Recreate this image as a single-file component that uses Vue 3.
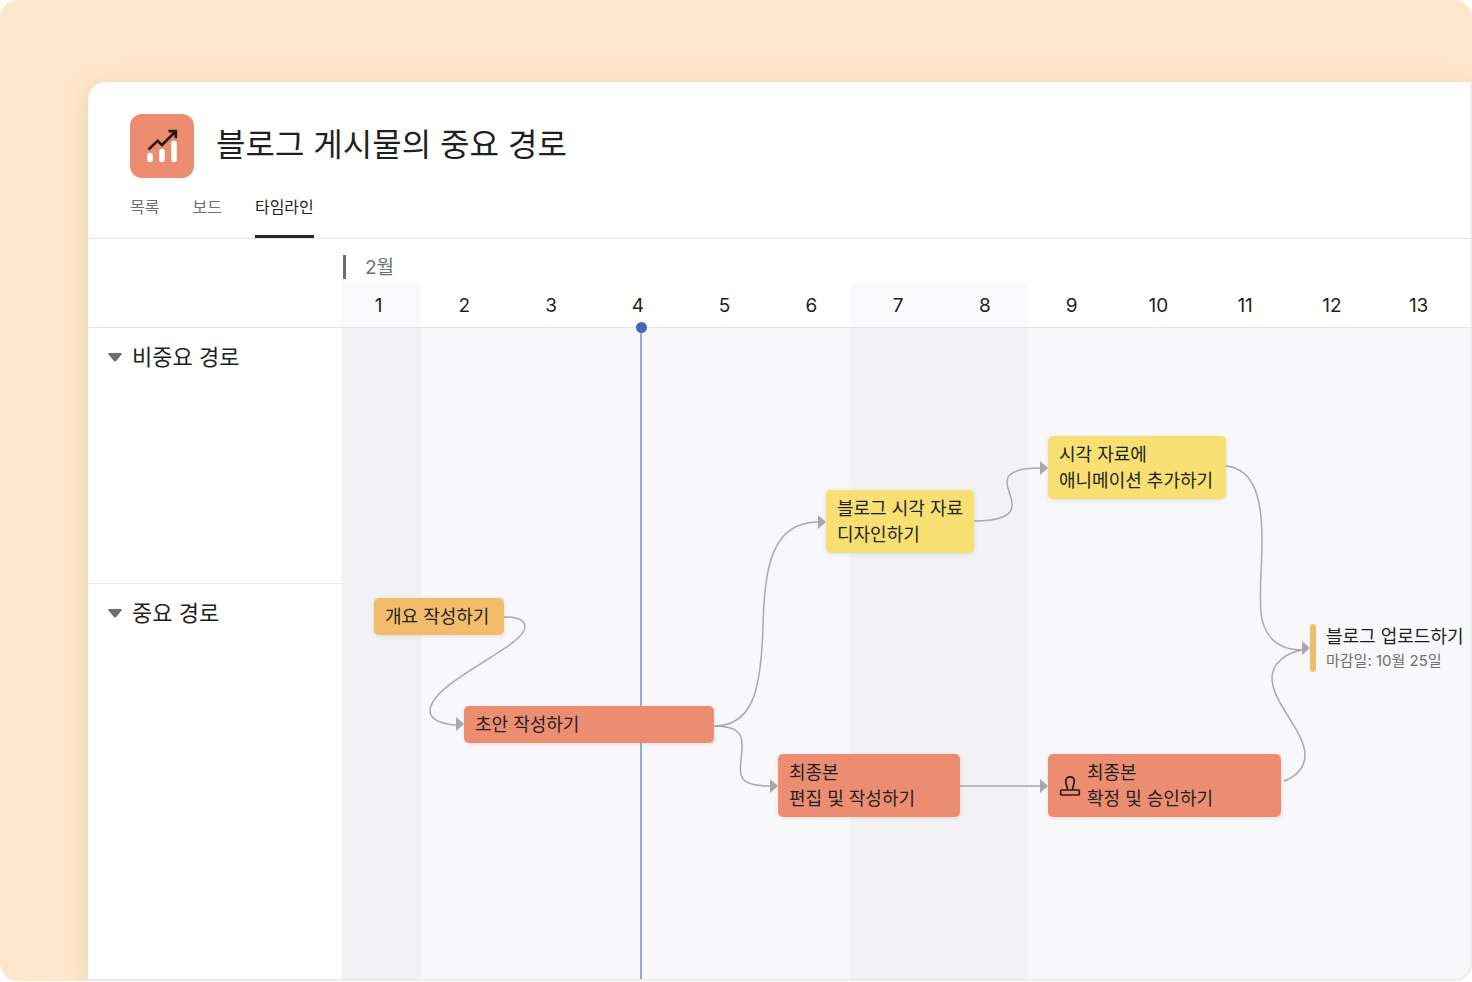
<template>
  <div class="stage">
    <main class="window">
      <header class="header">
        <div class="title-row">
          <svg class="project-icon" viewBox="0 0 64 64" aria-hidden="true">
            <rect width="64" height="64" rx="12" fill="#ec8d71" />
            <path d="M20 41.500V45.500M32 37.500V45.500M44 29.500V45.500" stroke="#fff" stroke-width="5.600" stroke-linecap="round" />
            <path d="M18.500 35.500L27.700 26.800L32 31L45.500 17.500M38.500 17.200H45.800V24.300" fill="none" stroke="#2a1a18" stroke-width="2.700" />
          </svg>
          <h1 class="title">블로그 게시물의 중요 경로</h1>
        </div>
        <nav class="tabs">
          <a
            v-for="tab in tabs"
            :key="tab"
            href="#"
            class="tab"
            :class="{ active: tab === activeTab }"
            @click.prevent="activeTab = tab"
          >{{ tab }}</a>
        </nav>
      </header>

      <div class="dates">
        <div class="month">2월</div>
        <div class="day-grid days">
          <span class="band first"></span>
          <span class="band weekend"></span>
          <span v-for="day in 13" :key="day" class="day" :style="{ gridColumn: day }">{{ day }}</span>
        </div>
      </div>

      <div class="board">
        <aside class="sections">
          <section v-for="section in sections" :key="section" class="section">
            <button type="button" class="section-toggle">
              <svg class="caret" viewBox="0 0 14 9" aria-hidden="true">
                <path d="M1 0H13Q14.500 .3 13.500 1.500L8 8Q7 9 6 8L.5 1.500Q-.5 .3 1 0Z" fill="#6d6e6f" />
              </svg>
              <span>{{ section }}</span>
            </button>
          </section>
        </aside>

        <div class="canvas">
          <div class="day-grid canvas-bands">
            <span class="band first"></span>
            <span class="band weekend"></span>
          </div>

          <div class="today"></div>

          <svg class="edges" aria-hidden="true">
            <path v-for="edge in edges" :key="edge" :d="edge" class="edge" />
            <path v-for="arrow in arrows" :key="arrow.x + '-' + arrow.y" :d="arrowPath(arrow)" class="arrow" />
          </svg>

          <div
            v-for="task in tasks"
            :key="task.id"
            class="task"
            :class="task.color"
            :style="{ left: task.x + 'px', top: task.y + 'px', width: task.w + 'px', height: task.h + 'px' }"
          >
            <svg v-if="task.approval" class="stamp" viewBox="0 0 22 22" aria-hidden="true">
              <rect x="1.700" y="15" width="18.600" height="5" rx="1" />
              <path d="M8.300 15C8.800 11.500 6.700 9.500 6.700 6.300C6.700 3.500 8.500 1.800 11 1.800S15.300 3.500 15.300 6.300C15.300 9.500 13.200 11.500 13.700 15" />
            </svg>
            <div>
              <div v-for="line in task.lines" :key="line">{{ line }}</div>
            </div>
          </div>

          <div class="milestone">
            <div class="milestone-name">블로그 업로드하기</div>
            <div class="milestone-due">마감일: 10월 25일</div>
          </div>
        </div>
      </div>
    </main>
  </div>
</template>

<script setup>
import { ref } from 'vue';

const tabs = ['목록', '보드', '타임라인'];
const activeTab = ref('타임라인');
const sections = ['비중요 경로', '중요 경로'];

const tasks = [
  { id: 1, x: 32, y: 270, w: 130, h: 37, color: 'orange', lines: ['개요 작성하기'] },
  { id: 2, x: 122, y: 378, w: 250, h: 37, color: 'red', lines: ['초안 작성하기'] },
  { id: 3, x: 484, y: 162, w: 148, h: 63, color: 'yellow', lines: ['블로그 시각 자료', '디자인하기'] },
  { id: 4, x: 706, y: 108, w: 178, h: 63, color: 'yellow', lines: ['시각 자료에', '애니메이션 추가하기'] },
  { id: 5, x: 436, y: 426, w: 182, h: 63, color: 'red', lines: ['최종본', '편집 및 작성하기'] },
  { id: 6, x: 706, y: 426, w: 233, h: 63, color: 'red', approval: true, lines: ['최종본', '확정 및 승인하기'] },
];

const edges = [
  'M162 289C176 289 183 293 183 299C183 319 88 354 88 383C88 391 98 396 114 397',
  'M372 398C411 398 419 362 421 299C422 242 429 194 476 194',
  'M372 398C396 398 401 406 400 420C399 444 390 458 428 458',
  'M632 193C657 193 671 188 670 176C670 167 665 163 665 154C665 144 678 140 698 140',
  'M618 458H698',
  'M884 138C913 141 920 172 920 212C920 242 917 260 919 285C921 303 931 322 960 322',
  'M942 453C956 448 963 438 963 427C963 403 930 375 930 350C930 335 944 325 960 322',
];

const arrows = [
  { x: 122, y: 396 },
  { x: 484, y: 194 },
  { x: 436, y: 458 },
  { x: 706, y: 140 },
  { x: 706, y: 458 },
  { x: 968, y: 320 },
];

function arrowPath({ x, y }) {
  return `M${x} ${y}l-8 -7v14z`;
}
</script>

<style>
body {
  margin: 0;
  background: #fff;
}
</style>

<style scoped>
.stage {
  box-sizing: border-box;
  display: flex;
  min-height: calc(100vh - 1px);
  padding: 82px 0 0 88px;
  overflow: hidden;
  border-radius: 18px;
  background: #fee6cc;
  color: #1e1f21;
  font-family: Inter, "Noto Sans CJK KR", sans-serif;
}

.window {
  flex: 1;
  display: flex;
  flex-direction: column;
  min-width: 0;
  border-right: 2px solid #efeef2;
  border-bottom: 2px solid #ecebed;
  border-radius: 18px 0 18px 0;
  background: #fff;
  box-shadow: 0 4px 24px rgba(150, 140, 60, 0.2);
}

.header {
  padding: 32px 42px 0;
  border-bottom: 1px solid #e3e3e5;
}

.title-row {
  display: flex;
  align-items: center;
  gap: 22px;
}

.project-icon {
  width: 64px;
  height: 64px;
}

.title {
  margin: 0;
  padding-bottom: 3px;
  font-size: 32px;
  font-weight: 400;
  line-height: 48px;
}

.tabs {
  display: flex;
  gap: 33px;
  margin-top: 10px;
}

.tab {
  padding: 9px 0 18px;
  border-bottom: 3px solid transparent;
  color: #6d6e6f;
  font-size: 16px;
  line-height: 20px;
  text-decoration: none;
}

.tab.active {
  border-color: #252628;
  color: #1e1f21;
}

.dates {
  padding-left: 254px;
  border-bottom: 1px solid #e3e3e6;
}

.month {
  height: 24px;
  margin: 16px 0 3px 1px;
  padding-left: 19px;
  border-left: 3px solid #6d6e6f;
  color: #6d6e6f;
  font-size: 19px;
  line-height: 25px;
}

.day-grid {
  display: grid;
  grid-template-columns: 79px repeat(12, 1fr) 8px;
}

.days {
  grid-template-rows: 45px;
}

.day {
  grid-row: 1;
  font-size: 19px;
  line-height: 48px;
  text-align: center;
}

.day:nth-of-type(3) {
  padding-right: 6px;
}

.band {
  grid-row: 1;
  background: #f9f9fb;
}

.first {
  grid-column: 1;
}

.weekend {
  grid-column: 7 / 9;
  margin-left: -5px;
}

.days .weekend {
  border-radius: 8px 8px 0 0;
}

.board {
  flex: 1;
  display: flex;
}

.sections {
  flex: none;
  width: 254px;
}

.section {
  box-sizing: border-box;
  height: 255px;
  padding: 13px 20px;
}

.section + .section {
  border-top: 1px solid #ededef;
}

.section-toggle {
  display: flex;
  align-items: center;
  gap: 10px;
  padding: 0;
  border: 0;
  background: none;
  color: inherit;
  font: inherit;
  font-size: 22px;
  line-height: 32px;
}

.caret {
  width: 14px;
  height: 9px;
}

.canvas {
  position: relative;
  flex: 1;
  min-height: 600px;
  border-bottom-right-radius: 16px;
  background: #f8f7fa;
}

.canvas-bands {
  height: 100%;
}

.canvas-bands .band {
  background: #f2f2f4;
}

.today {
  position: absolute;
  top: 0;
  bottom: 0;
  left: 298px;
  width: 2px;
  background: #8fadd3;
}

.today::before {
  content: "";
  position: absolute;
  top: -6px;
  left: -4px;
  width: 11px;
  height: 11px;
  border-radius: 50%;
  background: #4668bb;
}

.edges {
  position: absolute;
  inset: 0;
  width: 100%;
  height: 100%;
}

.edge {
  fill: none;
  stroke: #a9a8ab;
  stroke-width: 1.5;
}

.arrow {
  fill: #a9a8ab;
}

.task {
  position: absolute;
  box-sizing: border-box;
  display: flex;
  align-items: center;
  gap: 6px;
  padding-left: 11px;
  border-radius: 5px;
  box-shadow: 0 1px 4px rgba(60, 40, 20, 0.12);
  font-size: 18px;
  line-height: 26px;
  white-space: nowrap;
}

.orange {
  background: #f1bd6c;
}

.red {
  background: #ec8d71;
}

.yellow {
  background: #f8df72;
}

.stamp {
  width: 22px;
  height: 22px;
  fill: none;
  stroke: #2a1a18;
  stroke-width: 1.7;
}

.milestone {
  position: absolute;
  top: 296px;
  left: 968px;
  height: 48px;
  padding-left: 16px;
  white-space: nowrap;
}

.milestone::before {
  content: "";
  position: absolute;
  top: 0;
  bottom: 0;
  left: 0;
  width: 6px;
  border-radius: 3px;
  background: #f1bd6c;
}

.milestone-name {
  font-size: 18px;
  line-height: 26px;
}

.milestone-due {
  color: #6d6e6f;
  font-size: 15px;
  line-height: 22px;
}
</style>
